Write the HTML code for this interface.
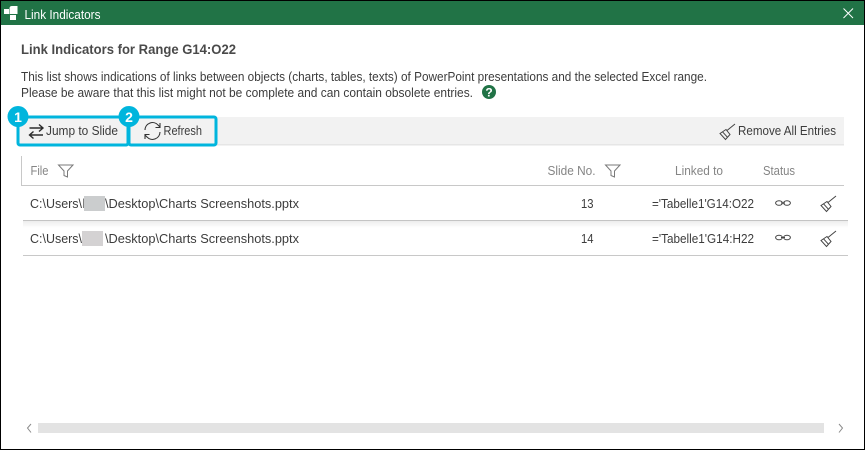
<!DOCTYPE html>
<html><head><meta charset="utf-8"><title>Link Indicators</title>
<style>
html,body{margin:0;padding:0;background:#fff;width:865px;height:450px;overflow:hidden}
svg{display:block}
text{font-family:"Liberation Sans",sans-serif;font-size:12.5px;fill:#3c3c3c}
.g{fill:#858585}
.ic{fill:none;stroke:#444;stroke-width:1}
.f{fill:none;stroke:#7a7a7a;stroke-width:1}
</style></head><body>
<svg width="865" height="450" viewBox="0 0 865 450" xmlns="http://www.w3.org/2000/svg">
<defs>
<linearGradient id="sh" x1="0" y1="0" x2="0" y2="1"><stop offset="0" stop-color="#000" stop-opacity=".07"/><stop offset="1" stop-color="#000" stop-opacity="0"/></linearGradient>
<g id="broom"><path class="ic" d="M0.500 8.500L6.500 4.500L10.500 9.500L6 14.500Z M3 6.800L8 12.300 M7.500 5.500L15.500 -1"/></g>
<g id="link"><ellipse class="ic" cx="4" cy="5" rx="3.400" ry="2.300"/><ellipse class="ic" cx="12" cy="5" rx="3.400" ry="2.300"/><path class="ic" d="M6 5h4"/></g>
<g id="filter"><path class="f" d="M0.500 0.500H15L9.500 6.500V12.500L6 11V6.500Z"/></g>
</defs>
<rect x="0" y="0" width="865" height="450" fill="#000"/>
<rect x="1" y="1" width="863" height="448" fill="#fff"/>
<rect x="1" y="1" width="863" height="24" fill="#217346"/>
<g fill="#fff"><path d="M12 6H17.500V14H9.500V8.500Q9.500 6 12 6Z"/><rect x="4" y="9" width="5" height="5"/><rect x="10" y="15" width="6" height="5"/></g>
<text x="24.500" y="19" textLength="76" lengthAdjust="spacingAndGlyphs" style="fill:#fff">Link Indicators</text>
<path d="M843.500 8.500L853 18M853 8.500L843.500 18" stroke="#fff" stroke-width="1" fill="none"/>

<text x="21" y="54" textLength="215" lengthAdjust="spacingAndGlyphs" style="font-size:13.500px;font-weight:bold;fill:#4a4a4a">Link Indicators for Range G14:O22</text>
<text x="21" y="81" textLength="686" lengthAdjust="spacingAndGlyphs">This list shows indications of links between objects (charts, tables, texts) of PowerPoint presentations and the selected Excel range.</text>
<text x="21" y="97" textLength="452" lengthAdjust="spacingAndGlyphs">Please be aware that this list might not be complete and can contain obsolete entries.</text>
<circle cx="489" cy="92" r="7" fill="#217346"/>
<text x="489" y="96.500" text-anchor="middle" style="fill:#fff;font-size:12px;font-weight:bold">?</text>

<rect x="19" y="117" width="825" height="28" fill="#f2f2f2"/>
<rect x="19" y="144" width="825" height="1.500" fill="#e6e6e6"/>
<rect x="18" y="117" width="110" height="28" rx="2" fill="none" stroke="#00b5dd" stroke-width="3"/>
<rect x="129" y="117" width="87" height="28" rx="2" fill="none" stroke="#00b5dd" stroke-width="3"/>
<circle cx="18" cy="116.500" r="10.500" fill="#00b5dd"/>
<circle cx="129" cy="116.500" r="10.500" fill="#00b5dd"/>
<text x="18" y="122" text-anchor="middle" style="fill:#fff;font-size:14px;font-weight:bold">1</text>
<text x="129" y="122" text-anchor="middle" style="fill:#fff;font-size:14px;font-weight:bold">2</text>

<path d="M29.500 128H42.500M39 124.500L43 128L39 131.500M43 135H30M33.500 131.500L29.500 135L33.500 138.500" fill="none" stroke="#2c2c2c" stroke-width="1.400"/>
<text x="46" y="135" textLength="72" lengthAdjust="spacingAndGlyphs">Jump to Slide</text>
<path d="M145 130a7.500 7.500 0 0 1 13-5l2 2M160 123v4.500h-4.500M160 132a7.500 7.500 0 0 1-13 5l-2-2M145 139v-4.500h4.500" fill="none" stroke="#333" stroke-width="1.100"/>
<text x="163.500" y="135" textLength="38.500" lengthAdjust="spacingAndGlyphs">Refresh</text>
<use href="#broom" transform="translate(719.500,125)"/>
<text x="738" y="135" textLength="98" lengthAdjust="spacingAndGlyphs">Remove All Entries</text>

<rect x="21" y="156" width="1" height="30" fill="#c8c8c8"/>
<rect x="21" y="185" width="823" height="1" fill="#c8c8c8"/>
<text class="g" x="30.500" y="175" textLength="18" lengthAdjust="spacingAndGlyphs">File</text>
<use href="#filter" transform="translate(58,164.500)"/>
<text class="g" x="547.500" y="175" textLength="48" lengthAdjust="spacingAndGlyphs">Slide No.</text>
<use href="#filter" transform="translate(605,164.500)"/>
<text class="g" x="675" y="175" textLength="48" lengthAdjust="spacingAndGlyphs">Linked to</text>
<text class="g" x="763" y="175" textLength="32" lengthAdjust="spacingAndGlyphs">Status</text>

<rect x="23" y="220" width="825" height="1" fill="#c4c4c4"/>
<rect x="23" y="221" width="825" height="7" fill="url(#sh)"/>
<rect x="23" y="255" width="825" height="1" fill="#c8c8c8"/>

<text x="30" y="208" textLength="52" lengthAdjust="spacingAndGlyphs">C:\Users\</text>
<text x="82.500" y="208">l</text>
<rect x="84" y="196" width="21" height="15" fill="#cbcdce"/>
<text x="105" y="208" textLength="194" lengthAdjust="spacingAndGlyphs">\Desktop\Charts Screenshots.pptx</text>
<text x="581" y="208" textLength="12.500" lengthAdjust="spacingAndGlyphs">13</text>
<text x="652" y="208" textLength="102" lengthAdjust="spacingAndGlyphs">='Tabelle1'G14:O22</text>
<use href="#link" transform="translate(775,198)"/>
<use href="#broom" transform="translate(820.500,197)"/>

<text x="30" y="243" textLength="52" lengthAdjust="spacingAndGlyphs">C:\Users\</text>
<rect x="82" y="231" width="21" height="15" fill="#d4d2d3"/>
<text x="105" y="243" textLength="194" lengthAdjust="spacingAndGlyphs">\Desktop\Charts Screenshots.pptx</text>
<text x="581" y="243" textLength="12.500" lengthAdjust="spacingAndGlyphs">14</text>
<text x="652" y="243" textLength="102" lengthAdjust="spacingAndGlyphs">='Tabelle1'G14:H22</text>
<use href="#link" transform="translate(775,232.500)"/>
<use href="#broom" transform="translate(820.500,232)"/>

<rect x="38" y="423" width="786" height="10" fill="#e3e3e3"/>
<path d="M31 424L27.500 428L31 432.500" fill="none" stroke="#8a8a8a" stroke-width="1"/>
<path d="M839 424L842.500 428L839 432.500" fill="none" stroke="#8a8a8a" stroke-width="1"/>
</svg>
</body></html>
